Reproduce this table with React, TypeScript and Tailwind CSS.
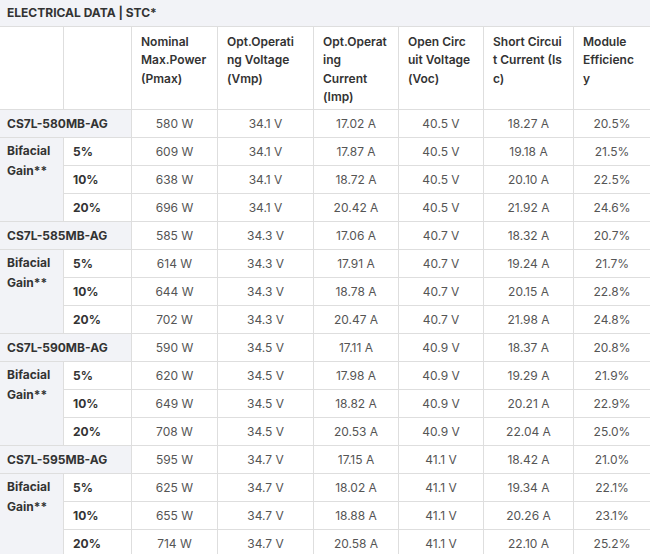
import React from "react";

const headers: string[][] = [
  ["Nominal", "Max.Power", "(Pmax)"],
  ["Opt.Operati", "ng Voltage", "(Vmp)"],
  ["Opt.Operat", "ing", "Current", "(Imp)"],
  ["Open Circ", "uit Voltage", "(Voc)"],
  ["Short Circui", "t Current (Is", "c)"],
  ["Module", "Efficienc", "y"],
];

type Row = string[];
type Group = { model: string; base: Row; gains: [string, Row][] };

const groups: Group[] = [
  {
    model: "CS7L-580MB-AG",
    base: ["580 W", "34.1 V", "17.02 A", "40.5 V", "18.27 A", "20.5%"],
    gains: [
      ["5%", ["609 W", "34.1 V", "17.87 A", "40.5 V", "19.18 A", "21.5%"]],
      ["10%", ["638 W", "34.1 V", "18.72 A", "40.5 V", "20.10 A", "22.5%"]],
      ["20%", ["696 W", "34.1 V", "20.42 A", "40.5 V", "21.92 A", "24.6%"]],
    ],
  },
  {
    model: "CS7L-585MB-AG",
    base: ["585 W", "34.3 V", "17.06 A", "40.7 V", "18.32 A", "20.7%"],
    gains: [
      ["5%", ["614 W", "34.3 V", "17.91 A", "40.7 V", "19.24 A", "21.7%"]],
      ["10%", ["644 W", "34.3 V", "18.78 A", "40.7 V", "20.15 A", "22.8%"]],
      ["20%", ["702 W", "34.3 V", "20.47 A", "40.7 V", "21.98 A", "24.8%"]],
    ],
  },
  {
    model: "CS7L-590MB-AG",
    base: ["590 W", "34.5 V", "17.11 A", "40.9 V", "18.37 A", "20.8%"],
    gains: [
      ["5%", ["620 W", "34.5 V", "17.98 A", "40.9 V", "19.29 A", "21.9%"]],
      ["10%", ["649 W", "34.5 V", "18.82 A", "40.9 V", "20.21 A", "22.9%"]],
      ["20%", ["708 W", "34.5 V", "20.53 A", "40.9 V", "22.04 A", "25.0%"]],
    ],
  },
  {
    model: "CS7L-595MB-AG",
    base: ["595 W", "34.7 V", "17.15 A", "41.1 V", "18.42 A", "21.0%"],
    gains: [
      ["5%", ["625 W", "34.7 V", "18.02 A", "41.1 V", "19.34 A", "22.1%"]],
      ["10%", ["655 W", "34.7 V", "18.88 A", "41.1 V", "20.26 A", "23.1%"]],
      ["20%", ["714 W", "34.7 V", "20.58 A", "41.1 V", "22.10 A", "25.2%"]],
    ],
  },
];

const valueCell =
  "flex h-[28px] items-center justify-center border-r border-b border-[#dedede] bg-white text-[12px] text-[#555555]";

export default function App() {
  return (
    <div
      className="w-[650px] h-[554px] overflow-hidden bg-white"
      style={{ fontFamily: "Inter, 'Noto Sans', sans-serif" }}
    >
      <div className="w-[651px]">
        <div className="flex h-[27px] items-center border-b border-[#dedede] bg-[#f2f3f7] pl-[7px] text-[12px] font-bold text-[#333333]">
          ELECTRICAL DATA | STC*
        </div>
        <div className="grid grid-cols-[64px_68px_86px_96px_85px_85px_90px_77px]">
          <div className="h-[83px] border-r border-b border-[#dedede] bg-white" />
          <div className="h-[83px] border-r border-b border-[#dedede] bg-white" />
          {headers.map((lines, i) => (
            <div
              key={i}
              className="h-[83px] border-r border-b border-[#dedede] bg-white pl-[9px] pt-[6px] text-[12px] font-semibold leading-[18.3px] text-[#333333]"
            >
              {lines.map((l, j) => (
                <div key={j} className="whitespace-nowrap">
                  {l}
                </div>
              ))}
            </div>
          ))}
          {groups.map((g) => (
            <React.Fragment key={g.model}>
              <div className="col-span-2 flex h-[28px] items-center border-r border-b border-[#dedede] bg-[#f2f3f7] pl-[7px] text-[12px] font-bold text-[#333333]">
                {g.model}
              </div>
              {g.base.map((v, k) => (
                <div key={k} className={valueCell}>
                  {v}
                </div>
              ))}
              <div className="row-span-3 border-r border-b border-[#dedede] bg-[#f2f3f7] pl-[7px] pt-[3px] text-[12px] font-bold leading-[20px] text-[#333333]">
                Bifacial
                <br />
                Gain**
              </div>
              {g.gains.map(([gain, vals]) => (
                <React.Fragment key={gain}>
                  <div className="flex h-[28px] items-center border-r border-b border-[#dedede] bg-white pl-[9px] text-[12px] font-bold text-[#333333]">
                    {gain}
                  </div>
                  {vals.map((v, k) => (
                    <div key={k} className={valueCell}>
                      {v}
                    </div>
                  ))}
                </React.Fragment>
              ))}
            </React.Fragment>
          ))}
        </div>
      </div>
    </div>
  );
}
